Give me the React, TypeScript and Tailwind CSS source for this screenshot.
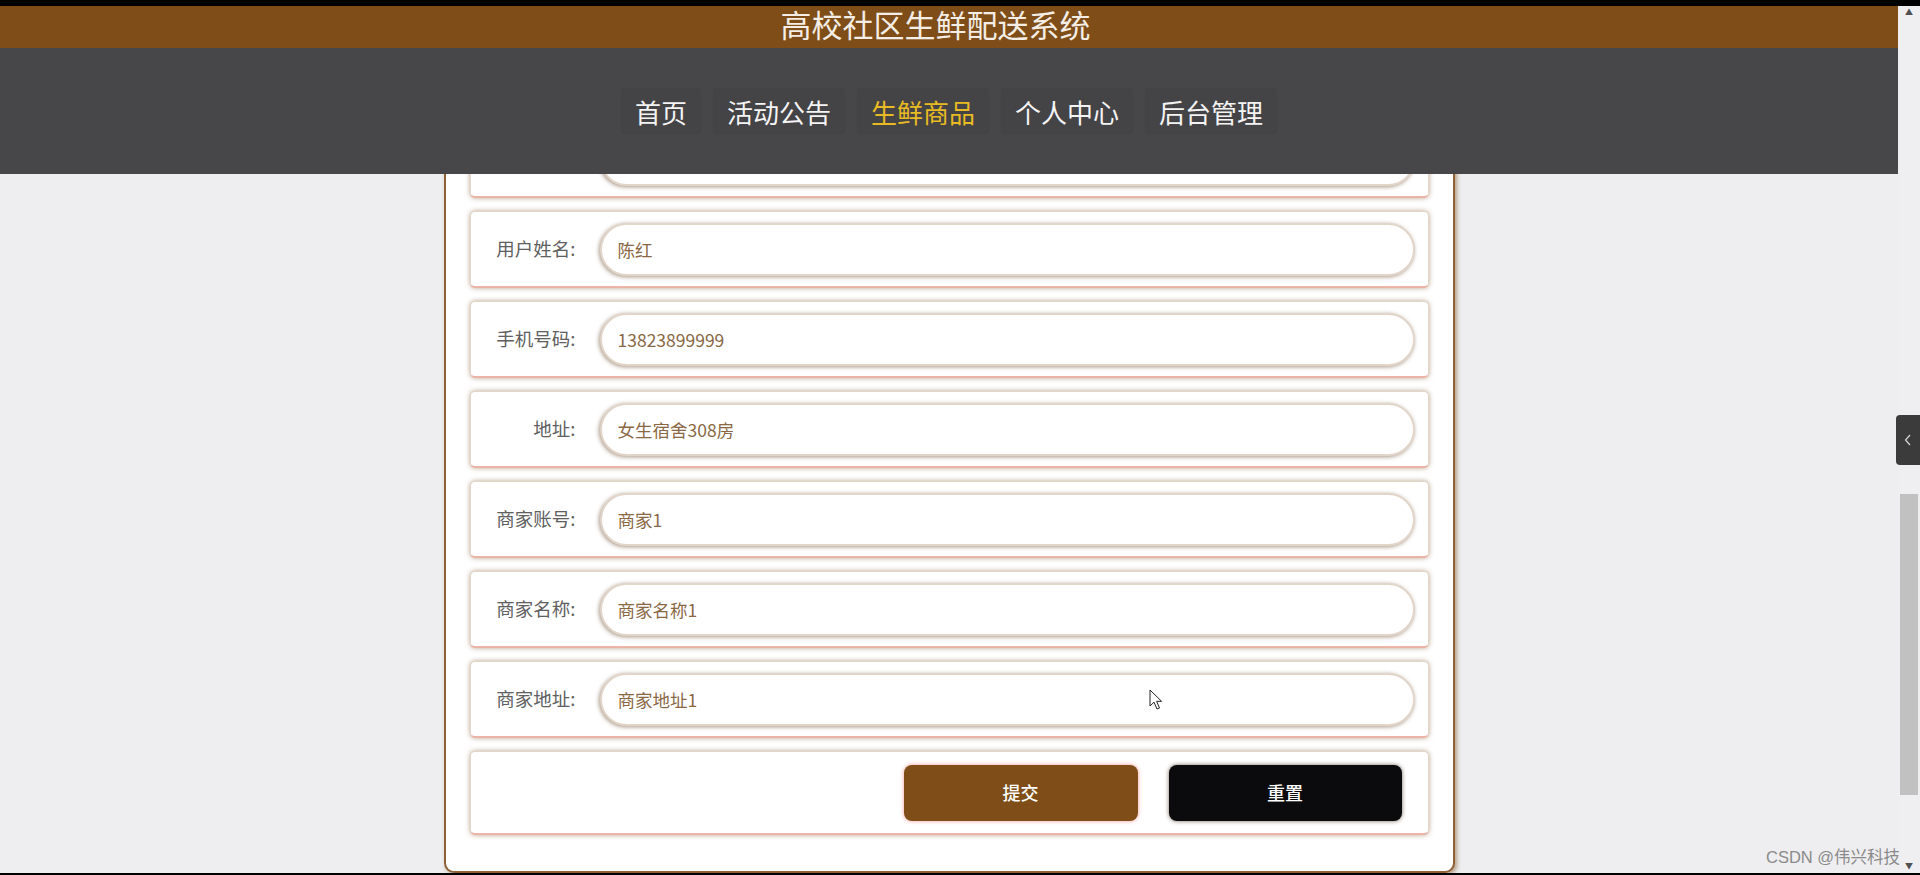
import React from 'react';

const navItems = [
  { label: '首页', active: false },
  { label: '活动公告', active: false },
  { label: '生鲜商品', active: true },
  { label: '个人中心', active: false },
  { label: '后台管理', active: false },
];

const fields = [
  { label: '用户账号:', value: '用户1' },
  { label: '用户姓名:', value: '陈红' },
  { label: '手机号码:', value: '13823899999' },
  { label: '地址:', value: '女生宿舍308房' },
  { label: '商家账号:', value: '商家1' },
  { label: '商家名称:', value: '商家名称1' },
  { label: '商家地址:', value: '商家地址1' },
];

const font = { fontFamily: '"Noto Sans CJK SC", "Noto Sans", sans-serif' };

function FormRow({ label, value }: { label: string; value: string }) {
  return (
    <div className="flex h-[77px] items-center rounded-[5px] border border-[#e2d6cb] border-b-2 border-b-[#ecb3a7] bg-white shadow-[0_0_5px_rgba(140,100,60,0.6)]">
      <div className="w-[105px] shrink-0 text-right text-[18.5px] text-[#606060]">{label}</div>
      <input
        defaultValue={value}
        className="ml-[24px] mr-[13px] h-[53px] flex-1 rounded-full border-2 border-[#e2d6ca] bg-white pl-[16px] text-[17.5px] text-[#8a6845] shadow-[-1px_1px_4px_rgba(110,80,50,0.6)] outline-none"
        style={font}
      />
    </div>
  );
}

export default function App() {
  return (
    <div className="relative flex h-[875px] w-[1920px] flex-col overflow-hidden bg-[#eeeef0]" style={font}>
      <div className="h-[6px] shrink-0 bg-black" />

      <div className="flex min-h-0 flex-1">
        {/* page */}
        <div className="relative flex-1 overflow-hidden">
          <header className="absolute inset-x-0 top-0 z-10">
            <div className="flex h-[42px] items-start justify-center bg-[#7e4d18] pr-[27px]">
              <span className="text-[31px] leading-[36px] text-[#f4eee6]">高校社区生鲜配送系统</span>
            </div>
            <nav className="flex h-[126px] items-center justify-center gap-[14px] bg-[#474649]">
              {navItems.map((item) => (
                <div
                  key={item.label}
                  className={`flex h-[44px] items-center rounded-[3px] bg-[#444346] px-[13px] text-[26px] shadow-[0_0_2px_rgba(0,0,0,0.18)] ${
                    item.active ? 'text-[#e9bb22]' : 'text-[#f4f4f4]'
                  }`}
                >
                  {item.label}
                </div>
              ))}
            </nav>
          </header>

          <div className="mx-auto flex h-full w-[1011px] flex-col gap-[13px] rounded-b-[10px] border-x-2 border-b-2 border-[#8f6136] bg-white px-[24px] pt-[115px] shadow-[2px_2px_4px_rgba(127,79,26,0.5)]">
            {fields.map((f) => (
              <FormRow key={f.label} label={f.label} value={f.value} />
            ))}
            <div className="flex h-[84px] items-center justify-end gap-[31px] rounded-[5px] border border-[#e2d6cb] border-b-2 border-b-[#ecb3a7] bg-white pr-[26px] shadow-[0_0_5px_rgba(140,100,60,0.6)]">
              <button className="h-[56px] w-[234px] rounded-[8px] bg-[#7e4d18] text-[18px] font-medium text-white shadow-[0_0_4px_#f49a9a]">
                提交
              </button>
              <button className="h-[56px] w-[233px] rounded-[8px] bg-[#0b0b0d] text-[18px] font-medium text-white shadow-[0_0_4px_rgba(60,40,20,0.7)]">
                重置
              </button>
            </div>
          </div>
        </div>

        {/* scrollbar */}
        <div className="relative flex w-[22px] shrink-0 flex-col items-center bg-[#efeff1]">
          <span className="mt-[2px] text-[8px] leading-none text-[#505050]">▲</span>
          <div className="ml-[2px] mr-[3px] mt-[478px] h-[301px] w-[18px] self-start bg-[#c1c1c1]" />
          <span className="mt-auto mb-[3px] text-[8px] leading-none text-[#505050]">▼</span>
        </div>
      </div>

      <div className="h-[2px] shrink-0 bg-black" />

      {/* side drawer tab */}
      <div className="absolute left-[1896px] top-[415px] z-20 flex h-[50px] w-[24px] items-center justify-center rounded-l-[4px] bg-[#3b3b3b]">
        <svg width="8" height="12" viewBox="0 0 8 12" fill="none" stroke="#d8d8d8" strokeWidth="1.2">
          <path d="M6 1 L1.5 6 L6 11" />
        </svg>
      </div>

      {/* mouse cursor */}
      <svg className="absolute left-[1149px] top-[689px] z-20" width="14" height="22" viewBox="0 0 14 22">
        <path d="M1 1 L1 17 L5 13.2 L8 20 L10.5 19 L7.6 12.3 L12.6 12.3 Z" fill="white" stroke="#222" strokeWidth="1" strokeLinejoin="round" />
      </svg>

      {/* watermark */}
      <div className="absolute left-[1766px] top-[846px] z-20 text-[16.5px] leading-[22px] text-[#8a8a8a]" style={{ fontFamily: '"Liberation Sans", "Noto Sans CJK SC", sans-serif' }}>
        CSDN @伟兴科技
      </div>
    </div>
  );
}
